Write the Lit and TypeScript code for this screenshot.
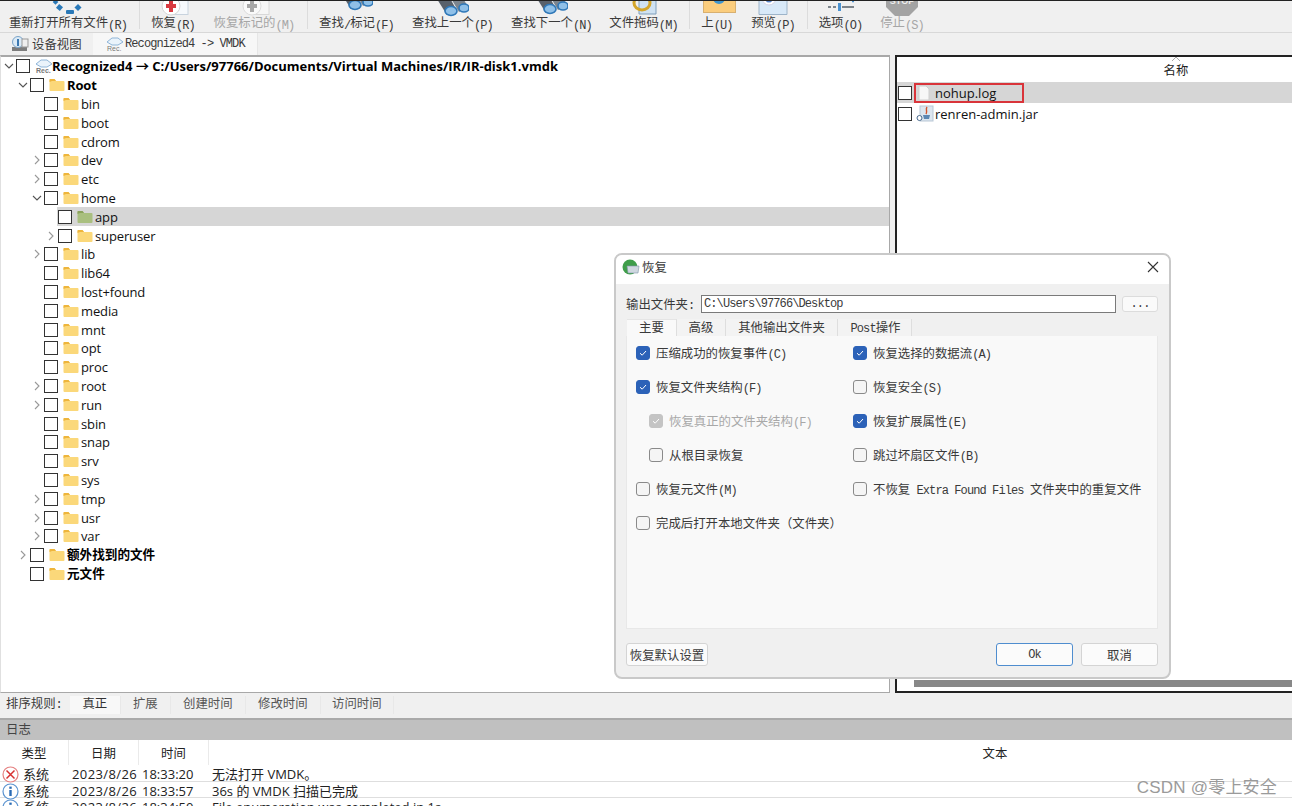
import { LitElement, html, css, svg } from "lit";
import { customElement } from "lit/decorators.js";

const mix = (t: string) =>
  t.split(/([\u0020-\u007e]+)/).map((s, i) => (i % 2 ? html`<span class="l">${s}</span>` : s));

const folder = (tint = false) => html`<svg class="fold" width="16" height="14" viewBox="0 0 16 14">
  <path d="M0.5 2 Q0.5 1 1.5 1 H5.5 L7 3 H14.5 Q15.5 3 15.5 4 V12 Q15.5 13 14.5 13 H1.5 Q0.5 13 0.5 12Z" fill="${tint ? "#a9bf7f" : "#fbd87a"}"/>
  <path d="M0.5 1.8 Q0.5 1 1.5 1 H5.5 L7 3 H3 L0.5 4Z" fill="${tint ? "#8ba35c" : "#eeb53c"}"/>
</svg>`;

const recIcon = html`<svg class="ic" width="18" height="16" viewBox="0 0 18 16">
  <path d="M1 6 L6 2 H12 L17 6 L12 9 H6Z" fill="#eaf3fb" stroke="#8fb5d8"/>
  <text x="1" y="15" font-size="7" font-family="Liberation Sans" fill="#777">Rec.</text>
</svg>`;

const tree: [number, string, number, boolean?, boolean?][] = [
  [0, "Recognized4 → C:/Users/97766/Documents/Virtual Machines/IR/IR-disk1.vmdk", 2, true],
  [1, "Root", 2, true],
  [2, "bin", 0], [2, "boot", 0], [2, "cdrom", 0], [2, "dev", 1], [2, "etc", 1], [2, "home", 2],
  [3, "app", 0, false, true], [3, "superuser", 1],
  [2, "lib", 1], [2, "lib64", 0], [2, "lost+found", 0], [2, "media", 0], [2, "mnt", 0], [2, "opt", 0], [2, "proc", 0],
  [2, "root", 1], [2, "run", 1], [2, "sbin", 0], [2, "snap", 0], [2, "srv", 0], [2, "sys", 0],
  [2, "tmp", 1], [2, "usr", 1], [2, "var", 1],
  [1, "额外找到的文件", 1, true], [1, "元文件", 0, true],
];

const tools: [string, number, string, boolean?][] = [
  ["重新打开所有文件(R)", 136, "refresh"], ["|", 0, ""],
  ["恢复(R)", 62, "restore"], ["恢复标记的(M)", 100, "restore2", true], ["|", 0, ""],
  ["查找/标记(F)", 93, "bino1"], ["查找上一个(P)", 99, "bino2"], ["查找下一个(N)", 99, "bino3"], ["文件拖码(M)", 85, "drag"], ["|", 0, ""],
  ["上(U)", 50, "up"], ["预览(P)", 62, "preview"], ["|", 0, ""],
  ["选项(O)", 61, "opts"], ["停止(S)", 62, "stop", true],
];

const bino = (h: number) => svg`
  <path d="M0 ${h - 18} L10 ${h - 2} L19 ${h - 8} L10 ${h - 24}Z" fill="#59616b"/>
  <path d="M12 ${h - 22} L22 ${h - 5} L31 ${h - 10} L22 ${h - 26}Z" fill="#7b858f"/>
  <ellipse cx="14" cy="${h - 6}" rx="6" ry="4.5" fill="#8fc0e8" stroke="#2f78b8" stroke-width="1.6"/>
  <ellipse cx="27" cy="${h - 9}" rx="5" ry="4" fill="#8fc0e8" stroke="#2f78b8" stroke-width="1.6"/>`;

const rest = (box: string, line: string, disc: string, disLine: string, cross: string) => html`<svg width="32" height="15" viewBox="0 0 32 15">
    <rect x="14" y="-4" width="17" height="17.5" fill="${box}" stroke="${line}"/>
    <circle cx="14" cy="5" r="9" fill="${disc}" stroke="${disLine}"/>
    <path d="M12 0 H16 V3 H19 V7 H16 V11 H12 V7 H9 V3 H12Z" fill="${cross}"/></svg>`;

const icons: Record<string, unknown> = {
  refresh: html`<svg width="32" height="14" viewBox="0 0 32 14">
    <g fill="#2a79b8"><rect x="1.5" y="-1" width="4" height="4" transform="rotate(45 3.5 1)"/>
    <rect x="5" y="4" width="5" height="5" transform="rotate(40 7.5 6.5)"/>
    <rect x="14" y="9" width="8" height="4" rx="1"/>
    <rect x="23.5" y="4" width="5" height="5" transform="rotate(45 26 6.5)"/></g></svg>`,
  restore: rest("#f6f9fc", "#c8d3de", "#fff", "#d6d6d6", "#d83a40"),
  restore2: rest("#f6f6f6", "#d8d8d8", "#fafafa", "#dcdcdc", "#a8a8a8"),
  bino1: html`<svg width="32" height="10" viewBox="0 0 32 10">${bino(10)}</svg>`,
  bino2: html`<svg width="32" height="16" viewBox="0 0 32 16">${bino(16)}</svg>`,
  bino3: html`<svg width="32" height="14" viewBox="0 0 32 14">${bino(14)}</svg>`,
  drag: html`<svg width="26" height="14" viewBox="0 0 26 14">
    <path d="M8 -2 H25 V13 H8Z" fill="#cfe2f2" stroke="#7f9fbb"/>
    <ellipse cx="11" cy="2" rx="8" ry="7" fill="none" stroke="#d4a62a" stroke-width="3"/></svg>`,
  up: html`<svg width="38" height="13" viewBox="0 0 38 13">
    <rect x="5.5" y="-2" width="32" height="13.5" fill="#fbcd7d" stroke="#d8b070"/>
    <circle cx="21" cy="-3" r="6" fill="#3d95cf"/></svg>`,
  preview: html`<svg width="30" height="15" viewBox="0 0 30 15">
    <path d="M1 -2 H29 V13.5 H1Z" fill="#d8e9f8" stroke="#9db4c9"/>
    <circle cx="11" cy="-3" r="7" fill="#fff" stroke="#d3d3e6"/><circle cx="11" cy="-2" r="3.5" fill="#5a84c8"/></svg>`,
  opts: html`<svg width="28" height="12" viewBox="0 0 28 12">
    <path d="M1 6 H4 M6 6 H9 M15 6 H27" stroke="#55606a" stroke-width="1.5"/>
    <rect x="11" y="2" width="3" height="8" fill="#4b93d1"/>
    <path d="M25 0.5 H27" stroke="#4b93d1" stroke-width="1.5"/></svg>`,
  stop: html`<svg width="32" height="15" viewBox="0 0 32 15">
    <path d="M0 -4 H32 V6 L23 15 H9 L0 6Z" fill="#a3a3a3"/>
    <text x="16" y="3" text-anchor="middle" font-size="9" font-weight="700" font-family="Liberation Sans" fill="#eee">STOP</text></svg>`,
};

const options: [string, number, boolean, boolean?][] = [
  ["压缩成功的恢复事件(C)", 0, true], ["恢复选择的数据流(A)", 0, true],
  ["恢复文件夹结构(F)", 0, true], ["恢复安全(S)", 0, false],
  ["恢复真正的文件夹结构(F)", 1, true, true], ["恢复扩展属性(E)", 0, true],
  ["从根目录恢复", 1, false], ["跳过坏扇区文件(B)", 0, false],
  ["恢复元文件(M)", 0, false], ["不恢复 Extra Found Files 文件夹中的重复文件", 0, false],
  ["完成后打开本地文件夹（文件夹）", 0, false],
];

const logs: [string, string, string, string][] = [
  ["err", "2023/8/26", "18:33:20", "无法打开 VMDK。"],
  ["info", "2023/8/26", "18:33:57", "36s 的 VMDK 扫描已完成"],
  ["info", "2023/8/26", "18:34:50", "File enumeration was completed in 1s"],
];

@customElement("app-root")
export class AppRoot extends LitElement {
  static styles = css`
    :host {
      display: block; position: relative; width: 1292px; height: 806px; overflow: hidden;
      background: #f0f0f0; color: #3a3a3a;
      font-family: "Liberation Mono", "Noto Sans CJK SC", monospace; font-size: 12.4px;
    }
    * { box-sizing: border-box; }
    .l { font-size: 12px; letter-spacing: -.9px; }
    .page { display: flex; flex-direction: column; height: 806px; }
    .toolbar { height: 33px; flex: none; display: flex; border-top: 1px solid #222; border-bottom: 1px solid #d8d8d8; background: #f0f0f0; }
    .tool { position: relative; flex: none; display: flex; justify-content: center; padding-top: 13px; line-height: 17px; height: 31px; white-space: nowrap; }
    .tool span { position: relative; top: 2px; }
    .tool svg { position: absolute; top: 0; left: 50%; transform: translateX(-50%); }
    .tool.off { color: #a6a6a6; }
    .sep { flex: none; width: 1px; margin: 0 2.5px; background: #dcdcdc; height: 28px; }
    .tabs { height: 22px; flex: none; display: flex; background: #f0f0f0; }
    .tab { display: flex; align-items: center; gap: 3px; padding: 0 0 0 11px; width: 93px; height: 22px; white-space: nowrap; }
    .tab.a { background: #f7f7f7; padding: 0 0 0 13px; width: 165px; gap: 1px; border-right: 1px solid #e6e6e6; }
    .main { flex: 1; display: flex; min-height: 0; gap: 5px; }
    .left { width: 890px; flex: none; background: #fff; border: 1px solid #a8a8a8; border-top-width: 2px; border-left-color: #e0e0e0; overflow: hidden; }
    .right { flex: 1; background: #fff; border: 2px solid #222; border-right: 0; position: relative; display: flex; flex-direction: column; }
    .row { position: relative; height: 18.81px; display: flex; align-items: center; font: 13px/18px "Open Sans", "Noto Sans CJK SC", sans-serif; color: #111; white-space: nowrap; }
    .row.b { font-weight: 700; color: #000; }
    .row .tx { letter-spacing: -.01em; }
    .row .tx.top { margin-left: -1px; letter-spacing: 0; }
    .row .cj { font-size: 12.6px; letter-spacing: 0; }
    .row.sel { background: linear-gradient(#d6d6d6, #d6d6d6) no-repeat; background-position: 56px 0; }
    .arrow { width: 10px; height: 14px; margin-left: 3px; margin-right: 2px; flex: none; }
    .cb { width: 14px; height: 14px; border: 1px solid #333; background: #fff; flex: none; margin-right: 5px; }
    .fold { flex: none; margin-right: 2px; }
    .ic { flex: none; }
    .hdr { height: 25px; width: 558px; flex: none; position: relative; text-align: center; padding-top: 5px; font: 12.4px/16px "Noto Sans CJK SC", sans-serif; color: #222; }
    .hdr svg { position: absolute; left: 50%; top: 0; margin-left: -4px; }
    .frow { height: 21px; display: flex; align-items: center; padding-left: 1px; gap: 1px; font: 13px/18px "Open Sans", sans-serif; color: #111; position: relative; }
    .frow.s { background: #d6d6d6; }
    .frow .cb { margin-right: 3px; }
    .frow .nm { margin-left: 2px; }
    .mark { position: absolute; left: 17px; top: 1px; width: 110px; height: 20px; border: 2px solid #d9343a; pointer-events: none; }
    .spacer { flex: 1; }
    .hscroll { height: 7px; margin: 0 0 4px 17px; background: #888; flex: none; }
    .sort { height: 26px; flex: none; display: flex; align-items: flex-start; padding: 3px 0 0 6px; line-height: 18px; background: #f0f0f0; border-bottom: 1px solid #aaa; }
    .sort .lab { margin-right: 8px; }
    .stab { height: 18px; display: flex; align-items: center; justify-content: center; border-right: 1px solid #e8e8e8; background: #f0f0f0; color: #555; }
    .stab.a { background: #f8f8f8; color: #333; }
    .loghead { height: 21px; flex: none; background: #c0c0c0; border-top: 1px solid #aaa; padding: 0 0 2px 6px; display: flex; align-items: center; color: #444; }
    .log { height: 66px; flex: none; background: #fff; overflow: hidden; }
    .lrow { display: grid; grid-template-columns: 69px 70px 70px 1572px; font: 13px/18px "Open Sans", "Noto Sans CJK SC", sans-serif; color: #222; height: 16px; align-items: center; border-bottom: 1px solid #dedede; }
    .lrow.h { height: 25px; text-align: center; border: 0; font: 12.4px/16px "Noto Sans CJK SC", sans-serif; }
    .lrow.h > div { height: 100%; display: flex; align-items: center; justify-content: center; border-right: 1px solid #eaeaea; padding: 0; }
    .lrow.h > div:last-child { border: 0; }
    .lrow > div { white-space: nowrap; padding-left: 3px; }
    .lrow .dt { letter-spacing: .4px; }
    .lrow .ty { display: flex; align-items: center; gap: 4px; padding-left: 2px; }
    .lrow.r1 { height: 17px; }
    .wm { position: absolute; right: 15px; bottom: 7px; font: 17px/22px "Liberation Sans", "Noto Sans CJK SC", sans-serif; color: #9a9a9a; letter-spacing: .2px; }
    .dialog { position: absolute; left: 614px; top: 253px; width: 557px; height: 426px; border: 2px solid #c9c9c9; border-radius: 8px; background: #f0f0f0; display: flex; flex-direction: column; overflow: hidden; }
    .title { height: 29px; background: #fff; flex: none; display: flex; align-items: center; padding: 0 0 6px 6px; gap: 2px; }
    .title .x { margin-left: auto; margin-right: 10px; }
    .body { flex: 1; display: flex; flex-direction: column; padding: 11px 11px 11px 10px; }
    .out { display: flex; align-items: center; height: 18px; flex: none; }
    .out .lb { width: 75px; flex: none; }
    .out .in { width: 415px; height: 18px; background: #fff; border: 1px solid #7a7a7a; padding-left: 2px; line-height: 16px; flex: none; white-space: nowrap; }
    .out .dots { margin-left: 6px; width: 36px; height: 16px; border: 1px solid #dcdcdc; background: #fafafa; border-radius: 3px; display: flex; align-items: center; justify-content: center; }
    .dtabs { display: flex; height: 17px; margin-top: 6px; flex: none; padding-left: 1px; }
    .dtab { height: 17px; padding-bottom: 2px; display: flex; align-items: center; justify-content: center; border-right: 1px solid #dedede; background: #f3f3f3; flex: none; }
    .dtab.a { background: #f9f9f9; border-top: 1px solid #e5e5e5; }
    .dtab.p { padding-left: 2px; }
    .panel { height: 293px; flex: none; background: #f9f9f9; border: 1px solid #e8e8e8; border-top: 0; display: grid; grid-template-columns: 217px 1fr; grid-auto-rows: 34px; padding: 0 0 0 9px; align-content: start; }
    .opt { display: flex; align-items: center; gap: 6px; white-space: nowrap; height: 34px; }
    .opt.in1 { padding-left: 13px; }
    .opt.dis { color: #a8a8a8; }
    .ck { width: 14px; height: 14px; border-radius: 3px; border: 1px solid #8a8a8a; background: #f5f5f5; flex: none; display: flex; }
    .ck.on { background: #2c62b8; border-color: #2c62b8; }
    .ck.on.dis { background: #c4c4c4; border-color: #c4c4c4; }
    .foot { display: flex; align-items: center; margin-top: 14px; height: 23px; flex: none; }
    .btn { height: 23px; border: 1px solid #d4d4d4; background: #fbfbfb; border-radius: 3px; display: flex; align-items: center; justify-content: center; flex: none; }
    .btn.def { width: 82px; }
    .btn.ok { width: 77px; margin-left: auto; border-color: #4f8dcf; }
    .btn.can { width: 77px; margin-left: 8px; }
  `;

  renderRow(r: (typeof tree)[number]) {
    const [lv, name, ar, bold, sel] = r;
    const root = lv === 0;
    const cjk = /^[^\u0000-\u007e]/.test(name);
    return html`<div class="row ${bold ? "b" : ""} ${sel ? "sel" : ""}" style="padding-left:${lv * 14}px">
      <svg class="arrow" viewBox="0 0 10 14">
        ${ar === 2 ? svg`<path d="M1 5 L5 9 L9 5" fill="none" stroke="#555" stroke-width="1.1"/>` : ar === 1 ? svg`<path d="M3 3 L7 7 L3 11" fill="none" stroke="#999" stroke-width="1.1"/>` : ""}
      </svg>
      <span class="cb"></span>
      ${root ? recIcon : folder(!!sel)}
      <span class="tx ${cjk ? "cj" : ""} ${root ? "top" : ""}">${name}</span>
    </div>`;
  }

  renderCheck(on: boolean, dis?: boolean) {
    return html`<span class="ck ${on ? "on" : ""} ${dis ? "dis" : ""}">${on
      ? html`<svg width="12" height="12" viewBox="0 0 12 12"><path d="M3 6.2 L5.2 8.2 L9 4" fill="none" stroke="#fff" stroke-width="1"/></svg>`
      : ""}</span>`;
  }

  render() {
    return html`<div class="page">
      <div class="toolbar">
        ${tools.map(([t, w, ic, off]) =>
          t === "|" ? html`<div class="sep"></div>`
            : html`<div class="tool ${off ? "off" : ""}" style="width:${w}px">${icons[ic]}<span>${mix(t)}</span></div>`)}
      </div>
      <div class="tabs">
        <div class="tab">
          <svg width="18" height="16" viewBox="0 0 18 16"><rect x="1" y="11" width="15" height="4" fill="#7c7c7c"/><circle cx="7" cy="6" r="5.5" fill="#dbeaf6" stroke="#7ba4c9"/><rect x="6" y="3" width="2" height="7" fill="#3b78b2"/><rect x="11" y="3" width="6" height="8" fill="#eee" stroke="#999"/></svg>
          <span>设备视图</span>
        </div>
        <div class="tab a">${recIcon}<span>${mix("Recognized4 -> VMDK")}</span></div>
      </div>
      <div class="main">
        <div class="left">${tree.map((r) => this.renderRow(r))}</div>
        <div class="right">
          <div class="hdr"><svg width="8" height="4" viewBox="0 0 8 4"><path d="M0 4 L4 0 L8 4" fill="none" stroke="#aaa"/></svg>名称</div>
          <div class="frow s"><span class="cb"></span>
            <svg width="16" height="16" viewBox="0 0 16 16"><path d="M3 1 H10 L13 4 V15 H3Z" fill="#f7f7f7" stroke="#cfcfcf"/></svg>
            <span class="nm">nohup.log</span><div class="mark"></div></div>
          <div class="frow"><span class="cb"></span>
            <svg width="18" height="17" viewBox="0 0 18 17"><rect x="4" y="1" width="13" height="15" fill="#dce6f0" stroke="#b9c7d5"/><path d="M11 2 C9 5 12 6 10 9" fill="none" stroke="#d2552c" stroke-width="1.4"/><path d="M7 10 H14 L13 14 H8Z" fill="#5c87b3"/><circle cx="3.5" cy="13" r="2.5" fill="#fff" stroke="#47688c"/></svg>
            <span>renren-admin.jar</span></div>
          <div class="spacer"></div>
          <div class="hscroll"></div>
        </div>
      </div>
      <div class="sort">
        <span class="lab">${mix("排序规则:")}</span>
        ${[["真正", 51], ["扩展", 50], ["创建时间", 75], ["修改时间", 75], ["访问时间", 73]].map(
          ([t, w], i) => html`<div class="stab ${i === 0 ? "a" : ""}" style="width:${w}px">${t}</div>`)}
      </div>
      <div class="loghead">日志</div>
      <div class="log">
        <div class="lrow h"><div>类型</div><div>日期</div><div>时间</div><div>文本</div></div>
        ${logs.map(([k, d, t, m], i) => html`<div class="lrow ${i === 0 ? "r1" : ""}">
          <div class="ty">
            ${k === "err"
              ? html`<svg width="17" height="17" viewBox="0 0 17 17"><circle cx="8.5" cy="8.5" r="7.5" fill="#fff" stroke="#e58080" stroke-width="1.2"/><path d="M4.5 4.5 L12.5 12.5 M12.5 4.5 L4.5 12.5" stroke="#d83030" stroke-width="1.5"/></svg>`
              : html`<svg width="17" height="17" viewBox="0 0 17 17"><circle cx="8.5" cy="8.5" r="7.5" fill="#fff" stroke="#5c94d0" stroke-width="1.2"/><rect x="7.3" y="7" width="2.4" height="6" fill="#2a6bb5"/><rect x="7.3" y="3.6" width="2.4" height="2.2" fill="#2a6bb5"/></svg>`}
            <span>系统</span>
          </div>
          <div class="dt">${d}</div><div>${t}</div><div>${m}</div>
        </div>`)}
      </div>
    </div>
    <div class="dialog">
      <div class="title">
        <svg width="18" height="16" viewBox="0 0 18 16"><circle cx="8" cy="8" r="7.5" fill="#3f9e4a"/><path d="M5 7 H17 L16 14 H6Z" fill="#cfd8e0" stroke="#8296a8" stroke-width=".6"/></svg>
        <span>恢复</span>
        <svg class="x" width="12" height="12" viewBox="0 0 12 12"><path d="M1 1 L11 11 M11 1 L1 11" stroke="#333" stroke-width="1.1"/></svg>
      </div>
      <div class="body">
        <div class="out">
          <span class="lb">${mix("输出文件夹:")}</span>
          <div class="in"><span class="l">C:\\Users\\97766\\Desktop</span></div>
          <div class="dots"><span class="l">...</span></div>
        </div>
        <div class="dtabs">
          ${[["主要", 50], ["高级", 49], ["其他输出文件夹", 112], ["Post操作", 74]].map(
            ([t, w], i) => html`<div class="dtab ${i === 0 ? "a" : ""} ${i === 3 ? "p" : ""}" style="width:${w}px"><span>${mix(String(t))}</span></div>`)}
        </div>
        <div class="panel">
          ${options.map(([t, ind, on, dis]) => html`<div class="opt ${ind ? "in1" : ""} ${dis ? "dis" : ""}">
            ${this.renderCheck(on, dis)}<span>${mix(t)}</span></div>`)}
        </div>
        <div class="foot">
          <div class="btn def">恢复默认设置</div>
          <div class="btn ok"><span class="l">Ok</span></div>
          <div class="btn can">取消</div>
        </div>
      </div>
    </div>
    <div class="wm">CSDN @零上安全</div>`;
  }
}
